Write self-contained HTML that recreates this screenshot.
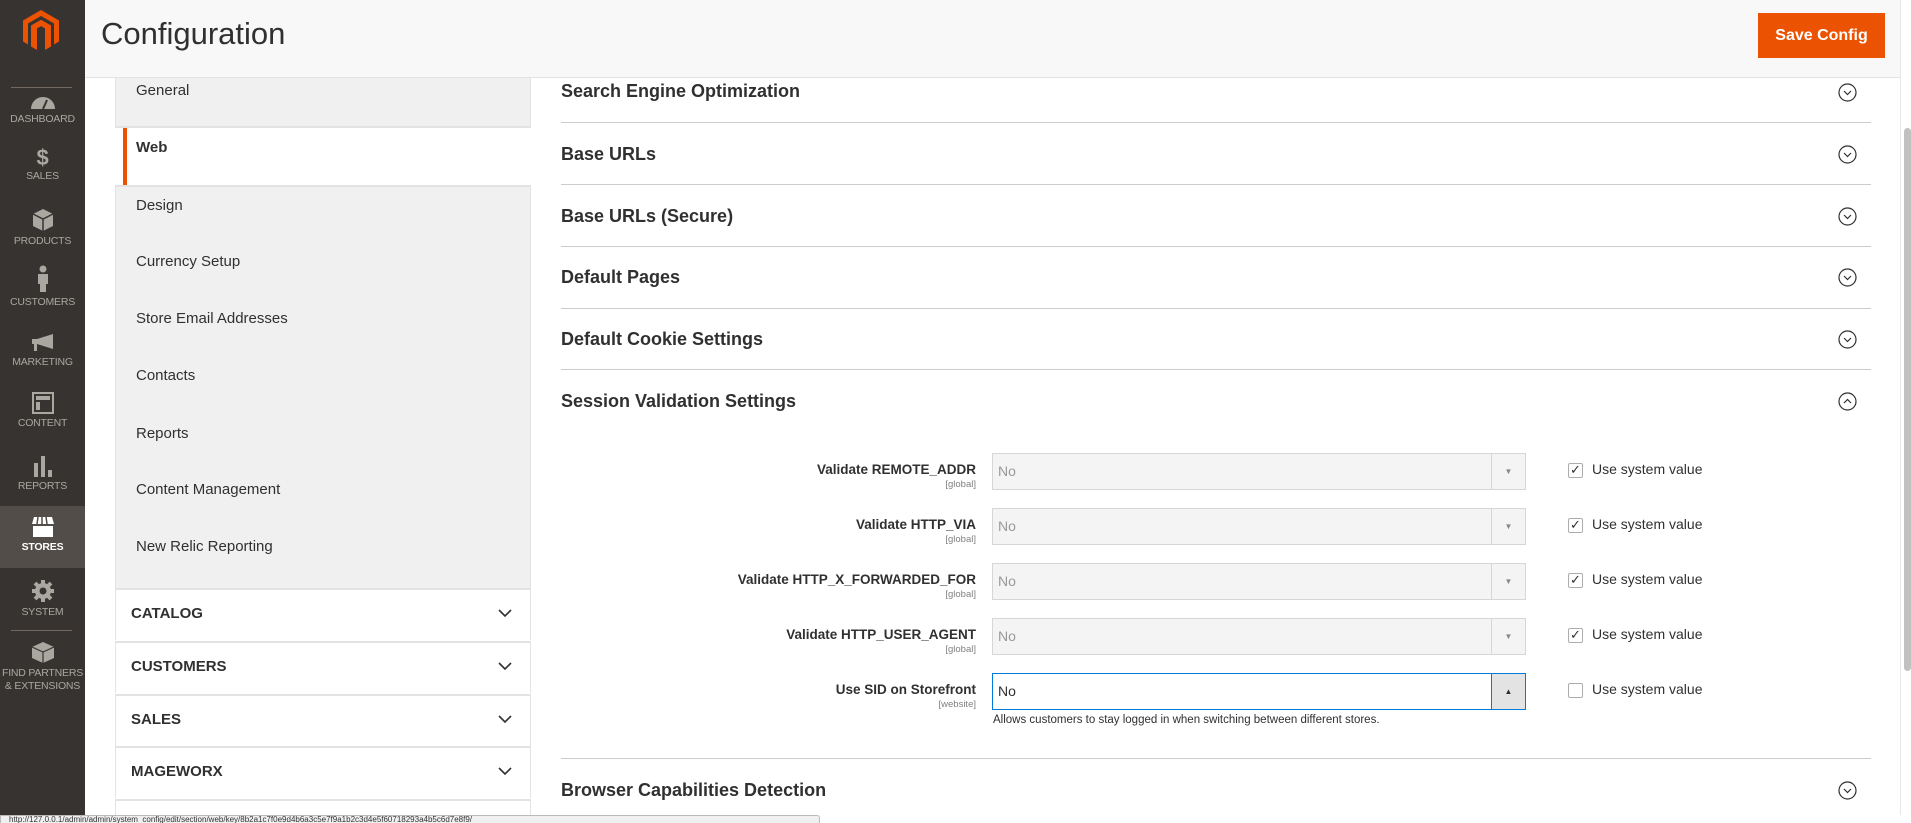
<!DOCTYPE html>
<html style="overflow:hidden;width:1911px;height:823px"><head><meta charset="utf-8"><style>
*{margin:0;padding:0;box-sizing:border-box}
body{width:1911px;height:823px;overflow:hidden;background:#fff;font-family:"Liberation Sans",sans-serif;color:#303030;position:relative}
.a{position:absolute}
#nav{left:0;top:0;width:85px;height:815px;background:#373330}
.ni{position:absolute;left:0;width:85px;text-align:center;color:#aaa6a0;font-size:10.5px;letter-spacing:-0.2px}
.ni svg{display:block;margin:0 auto 3px}
#hdr{left:85px;top:0;width:1815px;height:78px;background:#f8f8f8;border-bottom:1px solid #e3e3e3}
.cn{left:115px;width:416px;background:#f0f0f0;border-left:1px solid #e3e3e3;border-right:1px solid #e3e3e3}
.ci{position:absolute;left:136px;font-size:15px;color:#303030}
.grp{position:absolute;left:115px;width:416px;height:52px;border-top:2px solid #e3e3e3;border-left:1px solid #e3e3e3;border-right:1px solid #e3e3e3;background:#fff}
.grp b{position:absolute;left:15px;top:15px;font-size:15px;color:#303030}
.grp svg{position:absolute;right:18px;top:19px}
.sec{position:absolute;left:561px;width:1310px;font-size:18px;font-weight:bold;color:#303030}
.ln{position:absolute;left:561px;width:1310px;height:1px;background:#cccccc}
.circ{position:absolute;left:1838px;width:19px;height:19px}
.lbl{position:absolute;right:935px;text-align:right;font-size:13.5px;font-weight:bold;color:#303030}
.lbl small{display:block;font-size:9.5px;font-weight:normal;color:#808080;margin-top:2px}
.sel{position:absolute;left:992px;width:534px;height:37px;background:#f4f4f4;border:1px solid #d6d6d6;color:#999;font-size:14px;padding:9px 5px}
.sel i{position:absolute;right:0;top:0;width:34px;height:35px;border-left:1px solid #d6d6d6;font-style:normal;font-size:8px;text-align:center;line-height:35px;color:#888}
.cb{position:absolute;left:1568px;width:15px;height:15px;border:1px solid #adadad;background:#fff;border-radius:2px;font-size:13px;line-height:12px;text-align:center;color:#303030}
.ct{position:absolute;left:1592px;font-size:14px;color:#303030}
</style></head><body>
<div id="nav" class="a">
 <svg class="a" style="left:23px;top:10px" width="36" height="42" viewBox="0 0 36 42"><path d="M18 0L36 10.5V31.5L31 34.5V13.5L18 6L5 13.5V34.5L0 31.5V10.5Z M8 15.5L18 9.7L28 15.5V36.5L22 40V18.5L18 16.3L14 18.5V40L8 36.5Z" fill="#eb5202"/><path d="M14 18.5L18 16.3L22 18.5V40L18 42L14 40Z" fill="#373330"/></svg>
 <div class="a" style="left:11px;top:87px;width:61px;height:1px;background:#736963"></div>
 <div class="ni" style="top:94px"><svg width="26" height="16" viewBox="0 0 26 16"><path d="M1 15A12 12 0 0 1 25 15Z" fill="#aaa6a0"/><path d="M13 15L17 6" stroke="#373330" stroke-width="2"/></svg>DASHBOARD</div>
 <div class="ni" style="top:146px"><div style="font-size:22px;font-weight:bold;color:#aaa6a0;line-height:24px">$</div>SALES</div>
 <div class="ni" style="top:208px"><svg width="22" height="24" viewBox="0 0 22 24"><path d="M11 1L21 6V18L11 23L1 18V6Z" fill="#aaa6a0"/><path d="M1 6L11 11L21 6M11 11V23" stroke="#373330" stroke-width="1.5" fill="none"/></svg>PRODUCTS</div>
 <div class="ni" style="top:265px"><svg width="14" height="28" viewBox="0 0 14 28"><circle cx="7" cy="4" r="3.5" fill="#aaa6a0"/><path d="M2 9H12V19H10V27H4V19H2Z" fill="#aaa6a0"/></svg>CUSTOMERS</div>
 <div class="ni" style="top:333px"><svg width="24" height="20" viewBox="0 0 24 20"><path d="M1 6H6L22 1V16L6 11V18H3V11H1Z" fill="#aaa6a0"/></svg>MARKETING</div>
 <div class="ni" style="top:392px"><svg width="22" height="22" viewBox="0 0 22 22"><rect x="1" y="1" width="20" height="20" fill="none" stroke="#aaa6a0" stroke-width="2"/><rect x="4" y="4" width="14" height="4" fill="#aaa6a0"/><rect x="4" y="10" width="4" height="8" fill="#aaa6a0"/></svg>CONTENT</div>
 <div class="ni" style="top:455px"><svg width="20" height="22" viewBox="0 0 20 22"><rect x="1" y="8" width="4" height="14" fill="#aaa6a0"/><rect x="8" y="1" width="4" height="21" fill="#aaa6a0"/><rect x="15" y="15" width="4" height="7" fill="#aaa6a0"/></svg>REPORTS</div>
 <div class="a" style="left:0;top:506px;width:85px;height:62px;background:#524d49"></div>
 <div class="ni" style="top:516px;color:#fff;font-weight:bold"><svg width="24" height="22" viewBox="0 0 24 22"><path d="M3 1H21L23 8H1Z" fill="#fff"/><path d="M7 1L6 8M11 1V8M15 1L16 8" stroke="#524d49" stroke-width="1.5"/><rect x="2" y="10" width="20" height="11" fill="#fff"/></svg>STORES</div>
 <div class="ni" style="top:579px"><svg width="24" height="24" viewBox="0 0 24 24"><circle cx="12" cy="12" r="8" fill="#aaa6a0"/><path d="M12 1V23M1 12H23M4 4L20 20M20 4L4 20" stroke="#aaa6a0" stroke-width="4"/><circle cx="12" cy="12" r="3.5" fill="#373330"/></svg>SYSTEM</div>
 <div class="a" style="left:11px;top:630px;width:61px;height:1px;background:#736963"></div>
 <div class="ni" style="top:640px;line-height:13px"><svg width="24" height="24" viewBox="0 0 24 24"><path d="M12 2L23 7V18L12 23L1 18V7Z" fill="#aaa6a0"/><path d="M1 7L12 12L23 7M12 12V23" stroke="#373330" stroke-width="1.2" fill="none"/></svg>FIND PARTNERS<br>&amp; EXTENSIONS</div>
</div>
<div id="hdr" class="a"></div>
<div class="a" style="left:101px;top:16px;font-size:31px;color:#303030">Configuration</div>
<div class="a" style="left:1758px;top:13px;width:127px;height:45px;background:#eb5202;color:#fff;font-weight:bold;font-size:16px;text-align:center;line-height:45px">Save Config</div>
<div class="a" style="left:1900px;top:0;width:1px;height:815px;background:#e6e6e6"></div>
<div class="a" style="left:1904px;top:128px;width:7px;height:543px;background:#c1c1c1;border-radius:4px"></div>

<div class="a cn" style="top:78px;height:50px;border-bottom:2px solid #e3e3e3"></div>
<div class="a" style="left:123px;top:128px;width:408px;height:57px;background:#fff;border-left:4px solid #eb5202"></div>
<div class="a cn" style="top:185px;height:404px;border-top:2px solid #e3e3e3"></div>
<div class="ci" style="top:82px">General</div>
<div class="ci" style="top:139px;font-weight:bold">Web</div>
<div class="ci" style="top:197px">Design</div>
<div class="ci" style="top:253px">Currency Setup</div>
<div class="ci" style="top:310px">Store Email Addresses</div>
<div class="ci" style="top:367px">Contacts</div>
<div class="ci" style="top:425px">Reports</div>
<div class="ci" style="top:481px">Content Management</div>
<div class="ci" style="top:538px">New Relic Reporting</div>
<div class="grp" style="top:588px"><b>CATALOG</b><svg width="14" height="9" viewBox="0 0 14 9"><path d="M1 1L7 7L13 1" stroke="#303030" stroke-width="1.6" fill="none"/></svg></div>
<div class="grp" style="top:641px"><b>CUSTOMERS</b><svg width="14" height="9" viewBox="0 0 14 9"><path d="M1 1L7 7L13 1" stroke="#303030" stroke-width="1.6" fill="none"/></svg></div>
<div class="grp" style="top:694px"><b>SALES</b><svg width="14" height="9" viewBox="0 0 14 9"><path d="M1 1L7 7L13 1" stroke="#303030" stroke-width="1.6" fill="none"/></svg></div>
<div class="grp" style="top:746px"><b>MAGEWORX</b><svg width="14" height="9" viewBox="0 0 14 9"><path d="M1 1L7 7L13 1" stroke="#303030" stroke-width="1.6" fill="none"/></svg></div>
<div class="grp" style="top:799px;height:16px"></div>

<div class="sec" style="top:81px">Search Engine Optimization</div>
<div class="ln" style="top:122px"></div>
<div class="sec" style="top:144px">Base URLs</div>
<div class="ln" style="top:184px"></div>
<div class="sec" style="top:206px">Base URLs (Secure)</div>
<div class="ln" style="top:246px"></div>
<div class="sec" style="top:267px">Default Pages</div>
<div class="ln" style="top:308px"></div>
<div class="sec" style="top:329px">Default Cookie Settings</div>
<div class="ln" style="top:369px"></div>
<div class="sec" style="top:391px">Session Validation Settings</div>
<div class="ln" style="top:758px"></div>
<div class="sec" style="top:780px">Browser Capabilities Detection</div>

<svg class="circ" style="top:83px" viewBox="0 0 19 19"><circle cx="9.5" cy="9.5" r="8.5" fill="none" stroke="#303030" stroke-width="1.2"/><path d="M6 8L9.5 11.5L13 8" stroke="#303030" stroke-width="1.2" fill="none"/></svg>
<svg class="circ" style="top:145px" viewBox="0 0 19 19"><circle cx="9.5" cy="9.5" r="8.5" fill="none" stroke="#303030" stroke-width="1.2"/><path d="M6 8L9.5 11.5L13 8" stroke="#303030" stroke-width="1.2" fill="none"/></svg>
<svg class="circ" style="top:207px" viewBox="0 0 19 19"><circle cx="9.5" cy="9.5" r="8.5" fill="none" stroke="#303030" stroke-width="1.2"/><path d="M6 8L9.5 11.5L13 8" stroke="#303030" stroke-width="1.2" fill="none"/></svg>
<svg class="circ" style="top:268px" viewBox="0 0 19 19"><circle cx="9.5" cy="9.5" r="8.5" fill="none" stroke="#303030" stroke-width="1.2"/><path d="M6 8L9.5 11.5L13 8" stroke="#303030" stroke-width="1.2" fill="none"/></svg>
<svg class="circ" style="top:330px" viewBox="0 0 19 19"><circle cx="9.5" cy="9.5" r="8.5" fill="none" stroke="#303030" stroke-width="1.2"/><path d="M6 8L9.5 11.5L13 8" stroke="#303030" stroke-width="1.2" fill="none"/></svg>
<svg class="circ" style="top:392px" viewBox="0 0 19 19"><circle cx="9.5" cy="9.5" r="8.5" fill="none" stroke="#303030" stroke-width="1.2"/><path d="M6 11L9.5 7.5L13 11" stroke="#303030" stroke-width="1.2" fill="none"/></svg>
<svg class="circ" style="top:781px" viewBox="0 0 19 19"><circle cx="9.5" cy="9.5" r="8.5" fill="none" stroke="#303030" stroke-width="1.2"/><path d="M6 8L9.5 11.5L13 8" stroke="#303030" stroke-width="1.2" fill="none"/></svg>

<div class="lbl" style="top:462px">Validate REMOTE_ADDR<small>[global]</small></div>
<div class="sel" style="top:453px">No<i>▼</i></div>
<div class="cb" style="top:463px">✓</div><div class="ct" style="top:461px">Use system value</div>

<div class="lbl" style="top:517px">Validate HTTP_VIA<small>[global]</small></div>
<div class="sel" style="top:508px">No<i>▼</i></div>
<div class="cb" style="top:518px">✓</div><div class="ct" style="top:516px">Use system value</div>

<div class="lbl" style="top:572px">Validate HTTP_X_FORWARDED_FOR<small>[global]</small></div>
<div class="sel" style="top:563px">No<i>▼</i></div>
<div class="cb" style="top:573px">✓</div><div class="ct" style="top:571px">Use system value</div>

<div class="lbl" style="top:627px">Validate HTTP_USER_AGENT<small>[global]</small></div>
<div class="sel" style="top:618px">No<i>▼</i></div>
<div class="cb" style="top:628px">✓</div><div class="ct" style="top:626px">Use system value</div>

<div class="lbl" style="top:682px">Use SID on Storefront<small>[website]</small></div>
<div class="sel" style="top:673px;background:#fff;border-color:#007bdb;color:#303030">No<i style="background:#e3e3e3;border-left-color:#007bdb;color:#303030">▲</i></div>
<div class="cb" style="top:683px"></div><div class="ct" style="top:681px">Use system value</div>
<div class="a" style="left:993px;top:714px;font-size:11.5px;color:#303030">Allows customers to stay logged in when switching between different stores.</div>

<div class="a" style="left:0;top:815px;width:820px;height:8px;background:#f0f0f0;border:1px solid #bbb;border-bottom:none;border-radius:0 3px 0 0;overflow:hidden;font-size:8px;line-height:8px;color:#333;white-space:nowrap;padding-left:8px">http://127.0.0.1/admin/admin/system_config/edit/section/web/key/8b2a1c7f0e9d4b6a3c5e7f9a1b2c3d4e5f60718293a4b5c6d7e8f9/</div>
</body></html>
